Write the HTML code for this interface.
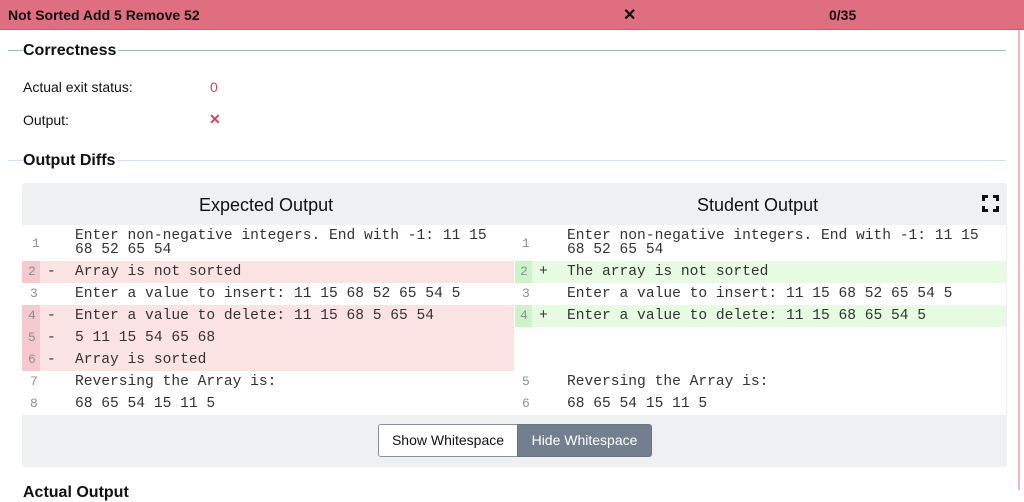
<!DOCTYPE html>
<html><head><meta charset="utf-8"><style>
*{margin:0;padding:0;box-sizing:border-box}
body{width:1024px;height:490px;overflow:hidden;background:#fff;font-family:"Liberation Sans",sans-serif;position:relative;color:#111}
.hdr{position:absolute;left:0;top:0;width:1024px;height:30px;background:#df6e80;border-bottom:1px solid #d05a6e}
.hdr span{position:absolute;top:7px;font-weight:bold;font-size:14px;color:#111}
.rb{position:absolute;left:1018px;top:30px;width:2px;height:460px;background:#f2b8c2}
.leg{position:absolute;left:8px;height:1px;width:998px}
.lt{position:absolute;left:23px;font-weight:bold;font-size:16px;background:#fff;padding:0 2px 0 0}
.lab{position:absolute;left:23px;font-size:14px}
.box{position:absolute;left:22px;top:183px;width:985px;height:284px;background:#eff0f2;border-radius:3px}
.th{position:absolute;top:195px;font-size:18px}
.tbl{position:absolute;left:22px;top:225px;width:984px;height:190px;background:#fff}
.r{position:absolute;height:22px;font-family:"Liberation Mono",monospace;font-size:14.6px;line-height:22px;color:#333;white-space:pre}
.n{position:absolute;color:#8a8f98;font-size:13px;font-family:"Liberation Mono",monospace}
.btn{position:absolute;top:424px;height:33px;font-size:14px;line-height:31px;text-align:center;border:1px solid #8a8f98}
</style></head><body>
<div class="hdr"><span style="left:8px">Not Sorted Add 5 Remove 52</span><span style="left:623px;font-size:16px;top:5px">✕</span><span style="left:829px">0/35</span></div>
<div class="rb"></div>
<div class="leg" style="top:50px;background:#a9b4c6"></div>
<div class="lt" style="top:42px">Correctness</div>
<div class="lab" style="top:79px">Actual exit status:</div>
<div class="lab" style="top:79px;left:210px;color:#d9425a">0</div>
<div class="lab" style="top:112px">Output:</div>
<div class="lab" style="top:111px;left:209px;color:#d9425a;font-weight:bold">✕</div>
<div class="leg" style="top:160px;background:#cfe0f2"></div>
<div class="lt" style="top:152px">Output Diffs</div>
<div class="box"></div>
<div class="th" style="left:199px">Expected Output</div>
<div class="th" style="left:697px">Student Output</div>
<svg style="position:absolute;left:982px;top:195px" width="17" height="17" viewBox="0 0 17 17" fill="none" stroke="#111" stroke-width="3"><path d="M1.5 6V1.5h4.5M11 1.5h4.5V6M15.5 11v4.5H11M6 15.5H1.5V11"/></svg>
<div class="tbl"></div>
<div class="r" style="left:22px;top:227px;height:34px;line-height:14px;width:492px"><span class="n" style="left:10px;top:10px">1</span><span style="position:absolute;left:53px;top:2px">Enter non-negative integers. End with -1: 11 15
68 52 65 54</span></div>
<div class="r" style="left:22px;top:261px;width:492px;background:#fbe3e3"><span style="position:absolute;left:0;top:0;width:18px;height:22px;background:#f6c9cc"></span><span class="n" style="left:6px">2</span><span style="position:absolute;left:25px">-</span><span style="position:absolute;left:53px">Array is not sorted</span></div>
<div class="r" style="left:22px;top:283px;width:492px"><span class="n" style="left:8px">3</span><span style="position:absolute;left:53px">Enter a value to insert: 11 15 68 52 65 54 5</span></div>
<div class="r" style="left:22px;top:305px;width:492px;height:66px;background:#fbe3e3"><span style="position:absolute;left:0;top:0;width:18px;height:66px;background:#f6c9cc"></span></div>
<div class="r" style="left:22px;top:305px;width:492px"><span class="n" style="left:6px">4</span><span style="position:absolute;left:25px">-</span><span style="position:absolute;left:53px">Enter a value to delete: 11 15 68 5 65 54</span></div>
<div class="r" style="left:22px;top:327px;width:492px"><span class="n" style="left:6px">5</span><span style="position:absolute;left:25px">-</span><span style="position:absolute;left:53px">5 11 15 54 65 68</span></div>
<div class="r" style="left:22px;top:349px;width:492px"><span class="n" style="left:6px">6</span><span style="position:absolute;left:25px">-</span><span style="position:absolute;left:53px">Array is sorted</span></div>
<div class="r" style="left:22px;top:371px;width:492px"><span class="n" style="left:8px">7</span><span style="position:absolute;left:53px">Reversing the Array is:</span></div>
<div class="r" style="left:22px;top:393px;width:492px"><span class="n" style="left:8px">8</span><span style="position:absolute;left:53px">68 65 54 15 11 5</span></div>
<div class="r" style="left:515px;top:227px;height:34px;line-height:14px;width:491px"><span class="n" style="left:7px;top:10px">1</span><span style="position:absolute;left:52px;top:2px">Enter non-negative integers. End with -1: 11 15
68 52 65 54</span></div>
<div class="r" style="left:515px;top:261px;width:491px;background:#e7fbe3"><span style="position:absolute;left:0;top:0;width:17px;height:22px;background:#cdf3c8"></span><span class="n" style="left:5px">2</span><span style="position:absolute;left:24px">+</span><span style="position:absolute;left:52px">The array is not sorted</span></div>
<div class="r" style="left:515px;top:283px;width:491px"><span class="n" style="left:7px">3</span><span style="position:absolute;left:52px">Enter a value to insert: 11 15 68 52 65 54 5</span></div>
<div class="r" style="left:515px;top:305px;width:491px;background:#e7fbe3"><span style="position:absolute;left:0;top:0;width:17px;height:22px;background:#cdf3c8"></span><span class="n" style="left:5px">4</span><span style="position:absolute;left:24px">+</span><span style="position:absolute;left:52px">Enter a value to delete: 11 15 68 65 54 5</span></div>
<div class="r" style="left:515px;top:371px;width:491px"><span class="n" style="left:7px">5</span><span style="position:absolute;left:52px">Reversing the Array is:</span></div>
<div class="r" style="left:515px;top:393px;width:491px"><span class="n" style="left:7px">6</span><span style="position:absolute;left:52px">68 65 54 15 11 5</span></div>
<div class="btn" style="left:378px;width:140px;background:#fff;border-radius:3px 0 0 3px">Show Whitespace</div>
<div class="btn" style="left:517px;width:135px;background:#737f8e;color:#fff;border-color:#6a7584;border-radius:0 3px 3px 0">Hide Whitespace</div>
<div class="lt" style="top:484px">Actual Output</div>
</body></html>
